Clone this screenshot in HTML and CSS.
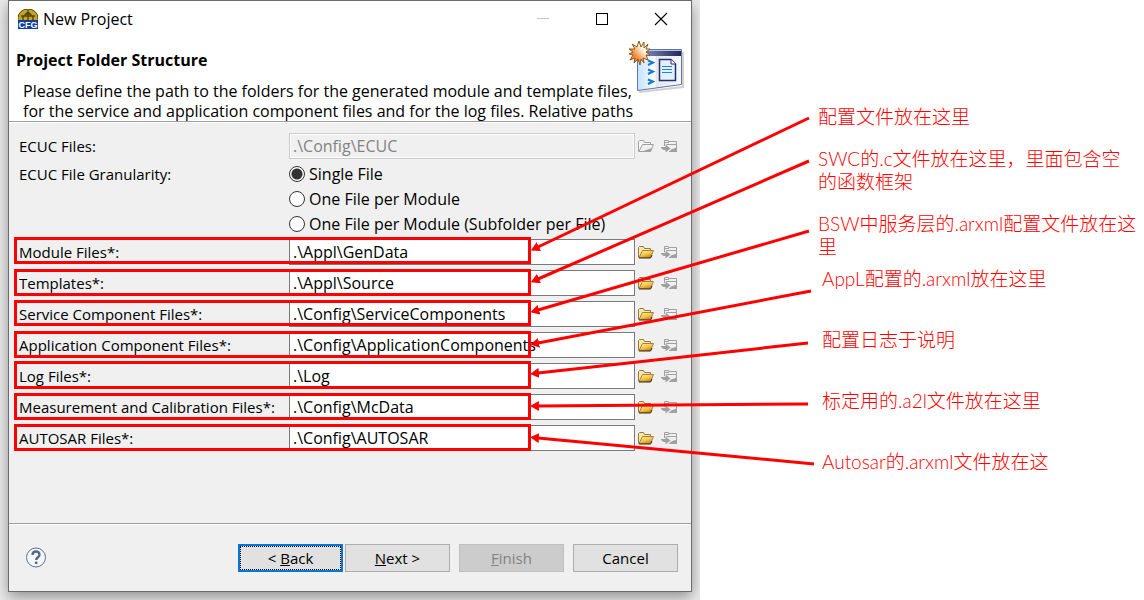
FILE: index.html
```html
<!DOCTYPE html>
<html lang="zh-CN">
<head>
  <meta charset="UTF-8" />
  <meta name="viewport" content="width=device-width, initial-scale=1.0" />
  <title>New Project</title>
  <link rel="stylesheet" href="styles.css">
</head>
<body>
  <!-- shared icons -->
  <svg class="icon-defs" width="0" height="0">
    <defs>
      <linearGradient id="gold" x1="0" y1="0" x2="0.6" y2="1">
        <stop offset="0" stop-color="#fff0a8" />
        <stop offset="0.6" stop-color="#f5c44c" />
        <stop offset="1" stop-color="#c98a16" />
      </linearGradient>
      <symbol id="folder" viewBox="0 0 16 14">
        <path d="M.5 12.5V2.5L1.5 1.5H5.5L6.5 3.5H12.5V6" fill="#fbe7a0" stroke="#94794a" />
        <path d="M1 12.5L4.5 5.5H15.5L12.5 12.5Z" fill="url(#gold)" stroke="#a98038" />
        <path d="M1 13H12.6L14 10" fill="none" stroke="#3b2b10" />
      </symbol>
      <symbol id="folder-off" viewBox="0 0 16 14">
        <path d="M.5 12.5V2.5L1.5 1.5H5.5L6.5 3.5H12.5V6" fill="#f5f5f5" stroke="#a0a0a0" />
        <path d="M1 12.5L4.5 5.5H15.5L12.5 12.5Z" fill="#f0f0f0" stroke="#a0a0a0" />
        <path d="M4 12.5L14 9L12.5 13H1Z" fill="#a0a0a0" />
      </symbol>
      <symbol id="import" viewBox="0 0 16 14">
        <path d="M3.500 7V1.500H7.500V2.500H15.500V12.500H8" fill="#f0f0f0" stroke="#a0a0a0" />
        <path d="M5.500 6V5.500H15M4 3.500H8" fill="none" stroke="#a0a0a0" />
        <path d="M8 13L10 10.500L16 8.500V13Z" fill="#a0a0a0" />
        <path d="M0 8H4.500V5.500L9.500 9.500L4.500 13.500V11H2.500L0 9Z" fill="#a0a0a0" />
      </symbol>
    </defs>
  </svg>

  <div class="page">
    <div class="backdrop">
      <div class="dialog">
        <div class="titlebar">
          <svg class="app-icon" width="20" height="20" viewBox="0 0 20 20">
            <path d="M0 12V9A10 9 0 0 1 20 9V12Z" fill="#c9a41c" stroke="#4d430f" />
            <path d="M10 1V12M5 12V8L10 3L15 8V12M3 7H17M7 5H13" fill="none" stroke="#51460f" stroke-width="1.400" />
            <rect y="11" width="20" height="9" fill="#123f9f" />
            <text x="10" y="19" text-anchor="middle" class="app-icon-text">CFG</text>
          </svg>
          <span class="titlebar-text">New Project</span>
          <div class="window-buttons">
            <button type="button" aria-label="Minimize" disabled>
              <svg width="14" height="14"><path d="M1 6.500H13" stroke="#c4c4c4" /></svg>
            </button>
            <button type="button" aria-label="Maximize">
              <svg width="14" height="14"><rect x="1.500" y="1.500" width="11" height="11" fill="none" stroke="#000" /></svg>
            </button>
            <button type="button" aria-label="Close">
              <svg width="14" height="14"><path d="M1 1L13 13M13 1L1 13" stroke="#000" stroke-width="1.100" /></svg>
            </button>
          </div>
        </div>

        <div class="header">
          <div class="header-text">
            <h1>Project Folder Structure</h1>
            <p>Please define the path to the folders for the generated module and template files,<br>for the service and application component files and for the log files. Relative paths</p>
          </div>
          <svg class="wizard-icon" width="56" height="52" viewBox="0 0 56 52">
            <defs>
              <linearGradient id="win" x1="0" y1="0" x2="1" y2="0">
                <stop offset="0" stop-color="#c5e2ff" />
                <stop offset="0.400" stop-color="#fafcff" />
                <stop offset="0.420" stop-color="#e4e6ee" />
                <stop offset="1" stop-color="#f8f8fb" />
              </linearGradient>
              <linearGradient id="bar" x1="0" y1="0" x2="1" y2="0">
                <stop offset="0" stop-color="#8e9ac4" />
                <stop offset="1" stop-color="#22265c" />
              </linearGradient>
              <linearGradient id="burst" x1="0" y1="1" x2="1" y2="0">
                <stop offset="0.350" stop-color="#f08c3c" />
                <stop offset="0.650" stop-color="#fff6e4" />
              </linearGradient>
            </defs>
            <path d="M10 51L54 46V11" fill="none" stroke="#d0d0d0" stroke-width="2" />
            <path d="M8.500 8.500H52.500V43.500L8.500 49.500Z" fill="url(#win)" stroke="#5b78ac" />
            <path d="M9 9H52V15H9Z" fill="url(#bar)" />
            <path d="M14 9.500H52" stroke="#b9c6dc" />
            <path d="M19 19.500L24 21.500L19 24M19 28.500L24 30.500L19 33M19 38.500L24 40.500L19 43" fill="none" stroke="#1679d2" stroke-width="2" />
            <path d="M30.500 18.500H42L46.500 23V39.500H30.500Z" fill="#e3f1ff" stroke="#26306c" stroke-width="1.500" />
            <path d="M42 18.500V23H46.500" fill="#fff" stroke="#26306c" />
            <path d="M33 25.500H43M33 28.500H43M33 31.500H43" stroke="#1d83dc" />
            <path d="M10 0L12 6L15 1L15 7L19 3L17 8L21 8L17 11L21 14L17 14L19 19L14 17L15 22L12 18L11 24L9 18L5 22L6 17L1 19L4 14L0 13L4 11L0 8L6 8L3 3L8 6Z" fill="url(#burst)" stroke="#945516" />
          </svg>
        </div>

        <form class="form" id="folders">
          <label for="ecuc">ECUC Files:</label>
          <input class="path" id="ecuc" type="text" value=".\Config\ECUC" disabled>
          <svg class="icon"><use href="#folder-off" /></svg>
          <svg class="icon"><use href="#import" /></svg>

          <span class="granularity">ECUC File Granularity:</span>
          <label class="radio"><input type="radio" name="granularity" checked>Single File</label>
          <label class="radio"><input type="radio" name="granularity">One File per Module</label>
          <label class="radio"><input type="radio" name="granularity">One File per Module (Subfolder per File)</label>

          <label for="module">Module Files*:</label>
          <input class="path" id="module" type="text" value=".\Appl\GenData">
          <svg class="icon"><use href="#folder" /></svg>
          <svg class="icon"><use href="#import" /></svg>

          <label for="templates">Templates*:</label>
          <input class="path" id="templates" type="text" value=".\Appl\Source">
          <svg class="icon"><use href="#folder" /></svg>
          <svg class="icon"><use href="#import" /></svg>

          <label for="service">Service Component Files*:</label>
          <input class="path" id="service" type="text" value=".\Config\ServiceComponents">
          <svg class="icon"><use href="#folder" /></svg>
          <svg class="icon"><use href="#import" /></svg>

          <label for="application">Application Component Files*:</label>
          <input class="path" id="application" type="text" value=".\Config\ApplicationComponents">
          <svg class="icon"><use href="#folder" /></svg>
          <svg class="icon"><use href="#import" /></svg>

          <label for="log">Log Files*:</label>
          <input class="path" id="log" type="text" value=".\Log">
          <svg class="icon"><use href="#folder" /></svg>
          <svg class="icon"><use href="#import" /></svg>

          <label for="mcdata">Measurement and Calibration Files*:</label>
          <input class="path" id="mcdata" type="text" value=".\Config\McData">
          <svg class="icon"><use href="#folder" /></svg>
          <svg class="icon"><use href="#import" /></svg>

          <label for="autosar">AUTOSAR Files*:</label>
          <input class="path" id="autosar" type="text" value=".\Config\AUTOSAR">
          <svg class="icon"><use href="#folder" /></svg>
          <svg class="icon"><use href="#import" /></svg>
        </form>

        <div class="footer">
          <button type="button" class="help" aria-label="Help">
            <svg width="22" height="22" viewBox="0 0 22 22">
              <circle cx="11" cy="10.500" r="9.500" fill="#f5f6f8" stroke="#5c6f8e" />
              <path d="M7.500 8C7.500 3.300 14.500 3.300 14.500 7.700C14.500 10.300 11.200 10.200 11.200 13" fill="none" stroke="#53678a" stroke-width="2.400" />
              <circle cx="11.200" cy="15.800" r="1.400" fill="#53678a" />
            </svg>
          </button>
          <div class="nav">
            <button type="button" class="btn btn-default">&lt; <u>B</u>ack</button>
            <button type="button" class="btn"><u>N</u>ext &gt;</button>
          </div>
          <button type="button" class="btn" disabled><u>F</u>inish</button>
          <button type="button" class="btn">Cancel</button>
        </div>
      </div>
    </div>

    <div class="notes">
      <p>配置文件放在这里</p>
      <p>SWC的.c文件放在这里，里面包含空<br>的函数框架</p>
      <p>BSW中服务层的.arxml配置文件放在这<br>里</p>
      <p class="indent close">AppL配置的.arxml放在这里</p>
      <p class="indent far">配置日志于说明</p>
      <p class="indent far">标定用的.a2l文件放在这里</p>
      <p class="indent far">Autosar的.arxml文件放在这</p>
    </div>

    <!-- red frames round the rows and arrows from the notes -->
    <svg class="marks" width="830" height="480" viewBox="0 0 830 480">
      <defs>
        <marker id="head" markerUnits="userSpaceOnUse" markerWidth="10" markerHeight="10" refX="1" refY="5" orient="auto">
          <path d="M0 0V10L9 5Z" fill="#f00" />
        </marker>
      </defs>
      <g class="frames">
        <rect x="15.500" y="238.500" width="514" height="24" />
        <rect x="15.500" y="270.500" width="514" height="24" />
        <rect x="15.500" y="301.500" width="514" height="23" />
        <rect x="15.500" y="332.500" width="514" height="24" />
        <rect x="15.500" y="362.500" width="514" height="25" />
        <rect x="15.500" y="394.500" width="514" height="24" />
        <rect x="15.500" y="425.500" width="514" height="24" />
      </g>
      <g class="arrows">
        <path d="M809 118L538 247" />
        <path d="M809 161L538 279" />
        <path d="M809 231L538 310" />
        <path d="M811 291L538 343" />
        <path d="M808 343L538 373" />
        <path d="M808 404L538 406" />
        <path d="M814 464L538 438" />
      </g>
    </svg>
  </div>
</body>
</html>
```

FILE: styles.css
```css
* {
  box-sizing: border-box;
}
body {
  margin: 0;
  background: #fff;
  color: #000;
  font-family: "Open Sans", "Noto Sans CJK SC", sans-serif;
  font-size: 15px;
  line-height: 20px;
}
h1, p {
  margin: 0;
}
button, input {
  font: inherit;
  color: inherit;
}
.icon-defs {
  position: absolute;
}
.page {
  position: relative;
  display: flex;
  align-items: flex-start;
}

/* dialog window */
.backdrop {
  flex: 0 0 auto;
  padding: 0 8px 9px;
  overflow: hidden;
  background: #ececec;
}
.dialog {
  background: #f0f0f0;
  border: 1px solid #6c6c6c;
  box-shadow: 0 5px 14px rgba(0, 0, 0, 0.4);
}
.titlebar {
  display: flex;
  align-items: center;
  height: 37px;
  padding: 0 1px 1px 9px;
  background: #fff;
}
.titlebar-text {
  flex: 1;
  padding-left: 5px;
}
.titlebar-text, .path, .radio {
  font-size: 16px;
}
.app-icon-text {
  fill: #fff;
  font: bold 9px "Liberation Sans", sans-serif;
}
.window-buttons {
  display: flex;
}
.window-buttons button {
  display: flex;
  align-items: center;
  justify-content: center;
  width: 59px;
  height: 36px;
  padding: 0;
  border: 0;
  background: none;
}
.header {
  display: flex;
  justify-content: space-between;
  height: 84px;
  padding: 3px 6px 0 7px;
  overflow: hidden;
  background: #fff;
  border-bottom: 1px solid #a0a0a0;
}
.header-text {
  width: 0;
}
.header h1 {
  padding-top: 9px;
  font-size: 16px;
  line-height: 20px;
  white-space: nowrap;
}
.header p {
  padding: 11px 0 0 7px;
  font-size: 16px;
  white-space: nowrap;
}
.wizard-icon {
  flex: none;
}

/* form */
.form {
  display: grid;
  grid-template-columns: 265px 346px 16px 16px;
  gap: 5px;
  justify-content: space-between;
  align-items: center;
  padding: 10px 14px 72px 10px;
  border-top: 1px solid #fff;
}
.form .icon {
  width: 16px;
  height: 14px;
  margin-left: -2px;
}
.form .icon + .icon {
  margin-left: 0;
}
.path {
  width: 100%;
  height: 26px;
  padding: 0 3px;
  border: 1px solid #7a7a7a;
  border-radius: 0;
  background: #fff;
}
.path:disabled {
  border-color: #ccc;
  background: #f0f0f0;
  box-shadow: inset 0 0 0 1px #fff;
  color: #838383;
}
.granularity {
  grid-column: 1;
}
.radio {
  grid-column: 2 / 5;
  display: flex;
  align-items: center;
  gap: 4px;
  height: 20px;
}
.radio input {
  appearance: none;
  width: 16px;
  height: 16px;
  margin: 0;
  border: 1px solid #333;
  border-radius: 50%;
  background: #fff;
}
.radio input:checked {
  background: radial-gradient(circle, #333 5px, #fff 6px);
}

/* footer */
.footer {
  display: flex;
  align-items: center;
  gap: 9px;
  padding: 20px 13px 19px 16px;
  border-top: 1px solid #a0a0a0;
  box-shadow: inset 0 1px #fff;
}
.help {
  display: flex;
  margin-right: auto;
  padding: 0;
  border: 0;
  background: none;
}
.nav {
  display: flex;
  gap: 2px;
}
.btn {
  width: 105px;
  height: 28px;
  padding: 0;
  border: 1px solid #adadad;
  background: #e1e1e1;
}
.btn-default {
  border: 2px solid #0078d7;
  outline: 1px dotted #000;
  outline-offset: -3px;
}
.btn:disabled {
  border-color: #bfbfbf;
  background: #ccc;
  color: #838383;
}

/* notes */
.notes {
  flex: 1;
  min-width: 0;
  padding: 105px 0 0 118px;
  color: #f00;
  font-family: Lato, "Noto Sans CJK SC", sans-serif;
  font-size: 19px;
  font-weight: 300;
  line-height: 23px;
  white-space: nowrap;
}
.notes p + p {
  margin-top: 19px;
}
.notes p + .close {
  margin-top: 9px;
}
.notes p + .far {
  margin-top: 38px;
}
.notes .indent {
  padding-left: 4px;
}
.marks {
  position: absolute;
  top: 0;
  left: 0;
  pointer-events: none;
}
.frames rect {
  fill: none;
  stroke: #f00;
  stroke-width: 3;
}
.arrows path {
  fill: none;
  stroke: #f00;
  stroke-width: 3;
  marker-end: url(#head);
}
```
